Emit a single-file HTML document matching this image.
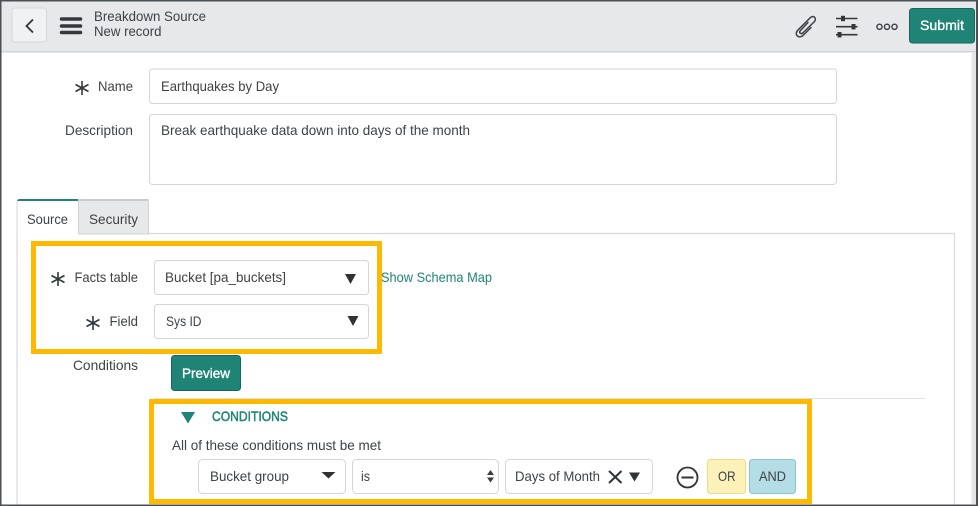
<!DOCTYPE html>
<html><head><meta charset="utf-8"><style>
html,body{margin:0;padding:0;background:#fff;width:978px;height:506px;overflow:hidden}
svg{display:block;filter:blur(.3px)}
text{font-family:"Liberation Sans",sans-serif;font-size:14px;fill:#3e4245}
.b{stroke-width:.35px}
</style></head><body>
<svg width="978" height="506" viewBox="0 0 978 506" xmlns="http://www.w3.org/2000/svg">
<rect width="978" height="506" fill="#fff"/>
<!-- header -->
<rect x="0" y="1" width="978" height="51" fill="#e6e8ea"/>
<rect x="0" y="51" width="978" height="1.5" fill="#d0d2d4"/>
<rect x="12" y="8" width="34.5" height="34" rx="3" fill="#f0f1f2" stroke="#d6d8da"/>
<path d="M33 19.500L26.500 26L33 32.500" fill="none" stroke="#34383b" stroke-width="1.900"/>
<path d="M61.500 19H80.500M61.500 26H80.500M61.500 32.500H80.500" stroke="#34383b" stroke-width="3.500" stroke-linecap="round"/>
<text x="94" y="21" textLength="112" lengthAdjust="spacingAndGlyphs">Breakdown Source</text>
<text x="94" y="36" textLength="67.500" lengthAdjust="spacingAndGlyphs">New record</text>
<!-- paperclip -->
<path d="M808 22.500L800 31C798.800 33 801 34.500 802.800 33L814.500 21.500C817 18.500 813.500 14.500 810.500 17.500L797.500 30.500C794 35 799 39 803 35.500L811 27.500" fill="none" stroke="#3a3e41" stroke-width="1.500" stroke-linecap="round"/>
<!-- sliders -->
<path d="M836 18.500H857.500M836 26.700H857.500M836 34.700H857.500" stroke="#34383b" stroke-width="1.600"/>
<rect x="841" y="15.800" width="4" height="5.400" fill="#34383b"/>
<rect x="851.500" y="24" width="4" height="5.400" fill="#34383b"/>
<rect x="837.500" y="32" width="4" height="5.400" fill="#34383b"/>
<circle cx="879.500" cy="26.800" r="2.600" fill="none" stroke="#3a3e41" stroke-width="1.400"/>
<circle cx="887" cy="26.800" r="2.600" fill="none" stroke="#3a3e41" stroke-width="1.400"/>
<circle cx="894.500" cy="26.800" r="2.600" fill="none" stroke="#3a3e41" stroke-width="1.400"/>
<rect x="909.500" y="8.500" width="65" height="34.500" rx="3" fill="#1f8476" stroke="#17665b"/>
<text x="920" y="30" class="b" style="fill:#fff;stroke:#fff" textLength="44" lengthAdjust="spacingAndGlyphs">Submit</text>
<!-- name / description -->
<path d="M82 81V95M75.500 84.500L88.500 91.500M88.500 84.500L75.500 91.500" stroke="#34383b" stroke-width="1.600"/>
<text x="98" y="91" textLength="35" lengthAdjust="spacingAndGlyphs">Name</text>
<rect x="149.500" y="69" width="687" height="34.500" rx="3" fill="#fff" stroke="#d3d5d7"/>
<text x="161" y="91" textLength="118" lengthAdjust="spacingAndGlyphs">Earthquakes by Day</text>
<text x="65" y="135" textLength="68" lengthAdjust="spacingAndGlyphs">Description</text>
<rect x="149.500" y="114.500" width="687" height="70" rx="3" fill="#fff" stroke="#d3d5d7"/>
<text x="161" y="135" textLength="309" lengthAdjust="spacingAndGlyphs">Break earthquake data down into days of the month</text>
<!-- tabs panel -->
<path d="M149 233.500H954.500V505M17 234V505" fill="none" stroke="#d6d8da" stroke-width="1.200"/>
<path d="M17 234V202Q17 199.500 20 199.500H78" fill="none" stroke="#d6d8da"/>
<path d="M17 201.500Q17 199 20 199H78V201H17Z" fill="#1f8476"/>
<path d="M78.500 234V200H146Q148.500 200 148.500 203V234Z" fill="#e6e8ea" stroke="#d0d2d4"/>
<rect x="78.500" y="199" width="70" height="2" fill="#c9cbcd"/>
<text x="27" y="224" textLength="41" lengthAdjust="spacingAndGlyphs">Source</text>
<text x="89" y="224" textLength="49" lengthAdjust="spacingAndGlyphs">Security</text>
<!-- facts -->
<path d="M58 272V286M51.500 275.500L64.500 282.500M64.500 275.500L51.500 282.500" stroke="#34383b" stroke-width="1.600"/>
<text x="74.500" y="282" textLength="63.500" lengthAdjust="spacingAndGlyphs">Facts table</text>
<rect x="154.500" y="260.500" width="214" height="34" rx="3" fill="#fff" stroke="#d3d5d7"/>
<text x="165" y="282" textLength="121" lengthAdjust="spacingAndGlyphs">Bucket [pa_buckets]</text>
<path d="M345 274H356L350.500 284Z" fill="#2f3336"/>
<path d="M93 316V330M86.500 319.500L99.500 326.500M99.500 319.500L86.500 326.500" stroke="#34383b" stroke-width="1.600"/>
<text x="109.500" y="326" textLength="28.500" lengthAdjust="spacingAndGlyphs">Field</text>
<rect x="154.500" y="304.500" width="214" height="34" rx="3" fill="#fff" stroke="#d3d5d7"/>
<text x="166" y="326" textLength="35.500" lengthAdjust="spacingAndGlyphs">Sys ID</text>
<path d="M347.500 316H358.500L353 326Z" fill="#2f3336"/>
<text x="381" y="282" style="fill:#1f8476" textLength="111" lengthAdjust="spacingAndGlyphs">Show Schema Map</text>
<rect x="33.500" y="243.500" width="346" height="108" fill="none" stroke="#ffb900" stroke-width="5"/>
<!-- conditions -->
<text x="73" y="370" textLength="65" lengthAdjust="spacingAndGlyphs">Conditions</text>
<rect x="171.500" y="355.500" width="69" height="35" rx="3" fill="#1f8476" stroke="#17665b"/>
<text x="182" y="378" class="b" style="fill:#fff;stroke:#fff" textLength="48" lengthAdjust="spacingAndGlyphs">Preview</text>
<rect x="154" y="398" width="771" height="1" fill="#dfe1e3"/>
<path d="M181 412H195L188 423.500Z" fill="#1f8476"/>
<text x="212" y="421" style="fill:#1f8476;stroke:#1f8476;stroke-width:.5px" textLength="76" lengthAdjust="spacingAndGlyphs">CONDITIONS</text>
<text x="172" y="450" textLength="209" lengthAdjust="spacingAndGlyphs">All of these conditions must be met</text>
<rect x="198.500" y="459.500" width="147" height="34" rx="4" fill="#fff" stroke="#d3d5d7"/>
<text x="210" y="481" textLength="79" lengthAdjust="spacingAndGlyphs">Bucket group</text>
<path d="M321.500 472H335.500L328.500 478.500Z" fill="#2f3336"/>
<rect x="352.500" y="459.500" width="146" height="34" rx="4" fill="#fff" stroke="#d3d5d7"/>
<text x="361" y="481" textLength="9" lengthAdjust="spacingAndGlyphs">is</text>
<path d="M487 475L490.500 470L494 475ZM487 477.500L490.500 482.500L494 477.500Z" fill="#3a3e41"/>
<rect x="505.500" y="459.500" width="147" height="34" rx="4" fill="#fff" stroke="#d3d5d7"/>
<text x="515" y="481" textLength="85" lengthAdjust="spacingAndGlyphs">Days of Month</text>
<path d="M609 471L621.500 483M621.500 471L609 483" stroke="#2f3336" stroke-width="2"/>
<path d="M629 472.500H640L634.500 481.500Z" fill="#2f3336"/>
<circle cx="687.500" cy="477.500" r="10" fill="none" stroke="#2f3336" stroke-width="1.800"/>
<path d="M681.500 477.500H693.500" stroke="#2f3336" stroke-width="2"/>
<rect x="707.500" y="459.500" width="38" height="34" rx="3" fill="#fcf1b9" stroke="#ecdd7f"/>
<text x="718" y="481" textLength="17.500" lengthAdjust="spacingAndGlyphs">OR</text>
<rect x="749.500" y="459.500" width="46" height="34" rx="3" fill="#b5dde6" stroke="#85c6d3"/>
<text x="759" y="481" textLength="27" lengthAdjust="spacingAndGlyphs">AND</text>
<rect x="151.500" y="401.500" width="658" height="100" fill="none" stroke="#ffb900" stroke-width="5"/>
<!-- frame -->
<rect x="971.500" y="52" width="4.500" height="452" fill="#e4e5e6"/>
<rect x="0" y="0" width="978" height="1.500" fill="#4a4f53"/>
<rect x="0" y="0" width="1.500" height="506" fill="#4a4f53"/>
<rect x="976" y="0" width="2" height="506" fill="#4a4f53"/>
<rect x="0" y="504.500" width="978" height="1.500" fill="#4a4f53"/>
</svg>
</body></html>
